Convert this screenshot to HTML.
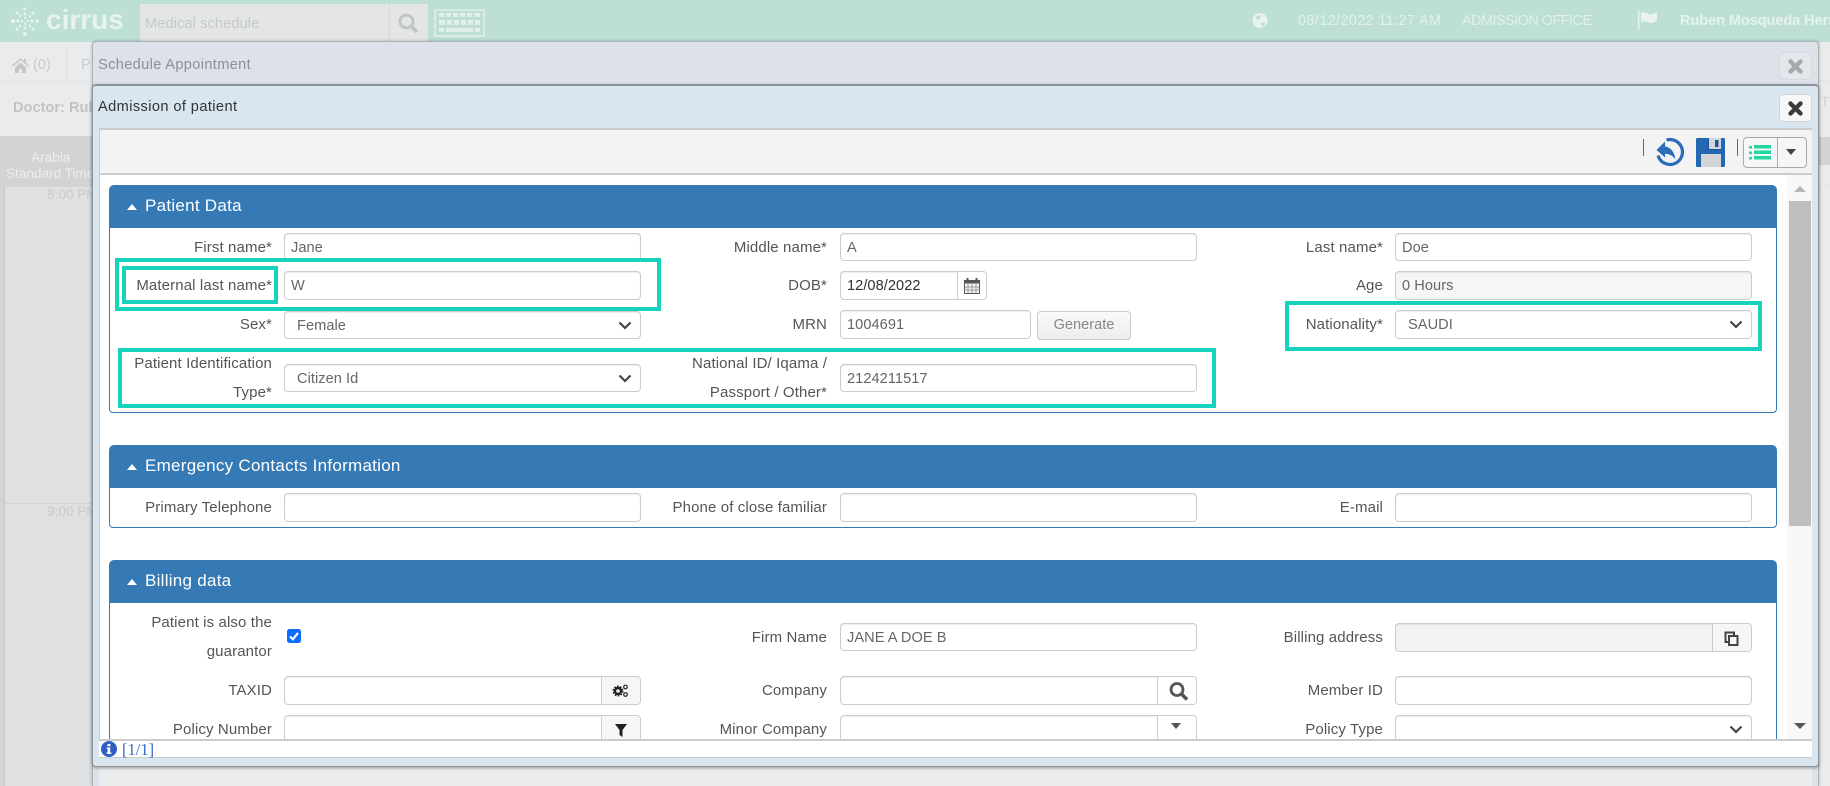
<!DOCTYPE html>
<html><head><meta charset="utf-8"><title>Admission of patient</title>
<style>
html,body{margin:0;padding:0;background:#e9ebed;overflow:hidden;}
body{position:relative;width:1830px;height:786px;overflow:hidden;font-family:"Liberation Sans",sans-serif;font-size:15px;color:#555;}
.a{position:absolute;box-sizing:border-box;}
.t{position:absolute;white-space:nowrap;line-height:20px;}
.l{position:absolute;white-space:nowrap;line-height:20px;text-align:right;width:220px;color:#555;font-size:15px;letter-spacing:.12px;margin-top:.5px}
.c1{left:52px}.c2{left:607px}.c3{left:1163px}
.i{position:absolute;box-sizing:border-box;background:#fff;border:1px solid #ccc;border-radius:4px;box-shadow:inset 0 1px 1px rgba(0,0,0,.08);padding-left:6px;font-size:14.6px;line-height:29px;color:#666;white-space:nowrap;overflow:hidden;letter-spacing:.05px}
.w1{left:284px;width:357px}.w2{left:840px;width:357px}.w3{left:1395px;width:357px}
.sel{padding-left:12px}
.chev{position:absolute;right:8px;top:9px;width:14px;height:9px}
.add{position:absolute;top:0;bottom:0;right:0;border-left:1px solid #ccc;background:#fff}
.hd{position:absolute;left:109px;width:1668px;height:43px;background:#3579b5;border-radius:5px 5px 0 0;color:#fff;font-size:17px;line-height:41px;padding-left:36px;box-sizing:border-box;letter-spacing:.27px}
.hd:before{content:"";position:absolute;left:18px;top:19px;border-left:5.5px solid transparent;border-right:5.5px solid transparent;border-bottom:6px solid #fff}
.bd{position:absolute;left:109px;width:1668px;border:1px solid #3579b5;border-top:0;box-sizing:border-box;border-radius:0 0 4px 4px;background:#fff}
.box{position:absolute;box-sizing:border-box;border:4.5px solid #17d2bd}
</style></head><body>

<!-- top bar -->
<div class="a" style="left:0;top:0;width:1830px;height:42px;background:#bddfd6"></div>
<svg class="a" style="left:9px;top:5px" width="34" height="32" viewBox="0 0 34 32" fill="#e9f4f1">
<circle cx="16" cy="4" r="1.6"/><circle cx="16" cy="9" r="1.5"/><circle cx="16" cy="13" r="1.2"/><circle cx="16" cy="19" r="1.2"/><circle cx="16" cy="23" r="1.5"/><circle cx="16" cy="29" r="2"/>
<circle cx="4" cy="16" r="2"/><circle cx="9" cy="16" r="1.6"/><circle cx="13" cy="16" r="1.2"/><circle cx="19" cy="16" r="1.2"/><circle cx="23" cy="16" r="1.6"/><circle cx="28" cy="16" r="1.8"/>
<circle cx="8" cy="8" r="1.5"/><circle cx="11" cy="11" r="1.2"/><circle cx="24" cy="8" r="1.5"/><circle cx="21" cy="11" r="1.2"/><circle cx="8" cy="24" r="1.5"/><circle cx="11" cy="21" r="1.2"/><circle cx="24" cy="24" r="1.5"/><circle cx="21" cy="21" r="1.2"/>
</svg>
<div class="t" style="left:46px;top:2px;font-size:28px;line-height:36px;font-weight:bold;color:#e6f3ef">cirrus</div>
<div class="a" style="left:140px;top:4px;width:288px;height:38px;background:#e3e6e5"></div>
<div class="a" style="left:389px;top:4px;width:1px;height:38px;background:#d6d9d8"></div>
<div class="t" style="left:145px;top:14px;font-size:14.6px;color:#c6c9c9;letter-spacing:.1px">Medical schedule</div>
<svg class="a" style="left:397px;top:12px" width="22" height="22" viewBox="0 0 22 22" fill="none" stroke="#c2c5c5"><circle cx="9.5" cy="9.5" r="6.5" stroke-width="3"/><path d="M14.5 14.5L20 20" stroke-width="4"/></svg>
<svg class="a" style="left:434px;top:9px" width="51" height="28" viewBox="0 0 51 28" fill="#e4efec"><path fill="none" stroke="#e4efec" stroke-width="1.5" d="M1 1h49v26H1z"/><path d="M5 4h5v4H5zM12 4h5v4h-5zM19 4h5v4h-5zM26 4h5v4h-5zM33 4h5v4h-5zM40 4h6v4h-6zM5 11h6v5H5zM13 11h5v5h-5zM20 11h5v5h-5zM27 11h5v5h-5zM34 11h5v5h-5zM41 11h5v5h-5zM5 19h5v4H5zM12 19h27v4H12zM41 19h5v4h-5z"/></svg>
<svg class="a" style="left:1252px;top:12px" width="18" height="17" viewBox="0 0 18 17"><circle cx="8" cy="8.5" r="7.5" fill="#e8f3f0"/><path d="M4 5l3-2 2 2-2 3-3-1zM9 11l3-1 1 2-3 3z" fill="#bddfd6"/></svg>
<div class="t" style="left:1298px;top:11px;font-size:14.4px;color:#e3f0ed;letter-spacing:.4px">08/12/2022 11:27 AM</div>
<div class="t" style="left:1462px;top:11px;font-size:14.4px;color:#e3f0ed;letter-spacing:-.5px">ADMISSION OFFICE</div>
<svg class="a" style="left:1638px;top:11px" width="20" height="18" viewBox="0 0 20 18" fill="#e8f3f0"><path d="M0 0h1.5v18H0z"/><path d="M3 2c4-2 7 2 10 1 2 0 4-1 6-2v9c-2 1-4 2-6 2-3 0-6-3-10-1z"/></svg>
<div class="t" style="left:1680px;top:11px;font-size:14.6px;font-weight:bold;color:#e6f2ef;letter-spacing:-.1px">Ruben Mosqueda Herrera</div>

<!-- background page -->
<div class="a" style="left:0;top:42px;width:1830px;height:744px;background:#e9ebed"></div>
<div class="a" style="left:0;top:81px;width:92px;height:1px;background:#e0e2e4"></div>
<div class="a" style="left:66px;top:48px;width:1px;height:33px;background:#dcdee0"></div>
<svg class="a" style="left:12px;top:58px" width="17" height="15" viewBox="0 0 17 15" fill="#c5c7c8"><path d="M8.5 0L0 7.5l1 1L8.5 2 16 8.5l1-1-3-2.7V1h-2v2zM3 9.5V15h4v-4h3v4h4V9.5L8.5 4.500z"/></svg>
<div class="t" style="left:33px;top:55px;font-size:14.6px;color:#c9cbcc">(0)</div>
<div class="t" style="left:81px;top:55px;font-size:14.6px;color:#c9cbcc">P</div>
<div class="t" style="left:13px;top:98px;font-size:14.6px;font-weight:bold;color:#c0c2c3">Doctor: Rub</div>
<div class="a" style="left:0;top:136px;width:92px;height:650px;background:#d2d3d4"></div>
<div class="a" style="left:4px;top:187px;width:88px;height:599px;background:#dfe0e2;border-left:1px solid #c8c9ca"></div>
<div class="a" style="left:5px;top:503px;width:87px;height:1px;background:#d1d2d4"></div>
<div class="t" style="left:31px;top:148px;font-size:13.6px;color:#eceded">Arabia</div>
<div class="t" style="left:6px;top:164px;font-size:13.6px;color:#eceded">Standard Time</div>
<div class="t" style="left:47px;top:185px;font-size:13.6px;color:#c9cacb">8:00 PM</div>
<div class="t" style="left:47px;top:502px;font-size:13.6px;color:#c9cacb">9:00 PM</div>
<div class="a" style="left:1819px;top:137px;width:11px;height:28px;background:#d2d3d4"></div>
<div class="a" style="left:1819px;top:185px;width:11px;height:1px;background:#e0e2e4"></div>
<div class="a" style="left:1819px;top:81px;width:11px;height:1px;background:#e0e2e4"></div>
<div class="t" style="left:1821px;top:92px;font-size:13px;color:#cfd1d2">T</div>

<!-- modal 1 -->
<div class="a" style="left:92px;top:41px;width:1727px;height:745px;background:#dde1e9;border-radius:4px 4px 0 0;border:1px solid #aeb2b5;border-bottom:0;box-shadow:0 0 3px rgba(0,0,0,.25)"></div>
<div class="t" style="left:98px;top:55px;font-size:14.6px;color:#8c8f93;letter-spacing:.35px">Schedule Appointment</div>
<div class="a" style="left:1779px;top:52px;width:33px;height:28px;background:#e3e6eb;border:1px solid #d6d9df;border-radius:4px"></div>
<svg class="a" style="left:1788px;top:59px" width="15" height="15" viewBox="0 0 15 15"><path d="M2.5 2.5l10 10M12.5 2.5l-10 10" stroke="#a6a8ab" stroke-width="4.4" stroke-linecap="round"/></svg>
<div class="a" style="left:99px;top:766px;width:1713px;height:20px;background:#eaecee"></div>

<!-- modal 2 -->
<div class="a" style="left:92px;top:84px;width:1727px;height:683px;background:#d9e5ef;border:1px solid #8f9498;border-top:2px solid #8f9498;border-radius:4px;box-shadow:0 1px 3px rgba(0,0,0,.35)"></div>
<div class="t" style="left:98px;top:97px;font-size:14.6px;color:#333;letter-spacing:.4px">Admission of patient</div>
<div class="a" style="left:1779px;top:94px;width:33px;height:28px;background:#f7f7f7;border:1px solid #d2d5d8;border-radius:4px"></div>
<svg class="a" style="left:1788px;top:101px" width="15" height="15" viewBox="0 0 15 15"><path d="M2.5 2.5l10 10M12.5 2.5l-10 10" stroke="#3a3a3a" stroke-width="4.4" stroke-linecap="round"/></svg>

<!-- toolbar -->
<div class="a" style="left:99px;top:128px;width:1713px;height:47px;background:#f3f3f3;border:2px solid #ccc;border-width:2px 0 2px 1px"></div>
<div class="a" style="left:1643px;top:139px;width:1px;height:17px;background:#666"></div>
<svg class="a" style="left:1655px;top:137px" width="30" height="31" viewBox="0 0 30 31"><path d="M11.500 3.000A12.500 12.500 0 1 1 3 18.500" fill="none" stroke="#2a6cb8" stroke-width="3.200"/><path d="M1.500 13L10 4.500V9.500C15.500 10 19.500 15 20.500 22.500C17.500 18.500 14 16.800 10 16.800V20.500Z" fill="#2a6cb8"/></svg>
<svg class="a" style="left:1696px;top:138px" width="30" height="29" viewBox="0 0 30 29"><rect width="29" height="29" rx="1.500" fill="#2367b3"/><path d="M0 1.500Q0 0 1.500 0H12V11H24V0H0z" fill="#1c5596" opacity="0"/><path d="M4 0h8v12h13V0z" fill="#1d5595"/><path d="M13 0h12v11H13z" fill="#cfd6de"/><path d="M19 2h3.500v7H19z" fill="#23538e"/><path d="M5 16h20v13H5z" fill="#d2d4d6"/></svg>
<div class="a" style="left:1737px;top:139px;width:1px;height:17px;background:#666"></div>
<div class="a" style="left:1743px;top:137px;width:64px;height:31px;background:#f6f6f6;border:1px solid #aaa;border-radius:4px"></div>
<div class="a" style="left:1777px;top:138px;width:1px;height:29px;background:#aaa"></div>
<svg class="a" style="left:1749px;top:145px" width="22" height="15" viewBox="0 0 22 15" fill="#23d6a2"><path d="M0 1h3v2.500H0zM0 6.500h3V9H0zM0 12h3v2.500H0zM5 0h17v3.500H5zM5 5.500h17V9H5zM5 11h17v3.500H5z"/></svg>
<div class="a" style="left:1786px;top:149px;border-left:5.500px solid transparent;border-right:5.500px solid transparent;border-top:6px solid #444"></div>

<!-- scroll content -->
<div class="a" style="left:99px;top:175px;width:1713px;height:564px;background:#fff;border-left:1px solid #ccc"></div>
<div class="a" style="left:0;top:0;width:1830px;height:739px;overflow:hidden;clip-path:inset(175px 18px 0 99px)">
  <div class="hd" style="top:185px">Patient Data</div>
  <div class="bd" style="top:228px;height:185px"></div>
  <div class="hd" style="top:445px">Emergency Contacts Information</div>
  <div class="bd" style="top:488px;height:40px"></div>
  <div class="hd" style="top:560px">Billing data</div>
  <div class="bd" style="top:603px;height:130px;border-bottom:0;border-radius:0"></div>
  <div class="a" style="left:109px;top:733px;width:1668px;height:6px;border-left:1px solid #3579b5;border-right:1px solid #3579b5"></div>

  <!-- row 1 -->
  <div class="l c1" style="top:237px">First name*</div><div class="i w1" style="top:233px;height:28px">Jane</div>
  <div class="l c2" style="top:237px">Middle name*</div><div class="i w2" style="top:233px;height:28px">A</div>
  <div class="l c3" style="top:237px">Last name*</div><div class="i w3" style="top:233px;height:28px">Doe</div>
  <!-- row 2 -->
  <div class="l c1" style="top:275px">Maternal last name*</div><div class="i w1" style="top:271px;height:29px">W</div>
  <div class="l c2" style="top:275px">DOB*</div>
  <div class="i" style="left:840px;width:147px;top:271px;height:29px;color:#333">12/08/2022
    <div class="add" style="width:28px;background:#fff"><svg style="position:absolute;left:6px;top:5px" width="16" height="17" viewBox="0 0 16 17"><path d="M.5 3.500h15v13H.5z" fill="#f2f2f2" stroke="#555"/><path d="M.5 3h15v3.500H.5z" fill="#555"/><path d="M3.500 1v4M12.500 1v4" stroke="#555" stroke-width="2"/><path d="M4 7v9M8 7v9M12 7v9M1 10h14M1 13h14" stroke="#888" stroke-width=".8"/></svg></div></div>
  <div class="l c3" style="top:275px">Age</div><div class="i w3" style="top:271px;height:29px;background:#f6f6f6">0 Hours</div>
  <!-- row 3 -->
  <div class="l c1" style="top:314px">Sex*</div>
  <div class="i w1 sel" style="top:311px;height:28px">Female<svg class="chev" viewBox="0 0 14 9"><path d="M1.500 1.500L7 7l5.500-5.500" fill="none" stroke="#444" stroke-width="2.200"/></svg></div>
  <div class="l c2" style="top:314px">MRN</div><div class="i" style="left:840px;width:191px;top:310px;height:29px">1004691</div>
  <div class="a" style="left:1037px;top:311px;width:94px;height:29px;background:linear-gradient(#fafafa,#ededed);border:1px solid #ccc;border-radius:4px;text-align:center;line-height:26px;font-size:14.6px;color:#888">Generate</div>
  <div class="l c3" style="top:314px">Nationality*</div>
  <div class="i w3 sel" style="top:310px;height:29px">SAUDI<svg class="chev" viewBox="0 0 14 9"><path d="M1.500 1.500L7 7l5.500-5.500" fill="none" stroke="#444" stroke-width="2.200"/></svg></div>
  <!-- row 4 -->
  <div class="l c1" style="top:353px">Patient Identification</div><div class="l c1" style="top:382px">Type*</div>
  <div class="i w1 sel" style="top:364px;height:28px">Citizen Id<svg class="chev" viewBox="0 0 14 9"><path d="M1.500 1.500L7 7l5.500-5.500" fill="none" stroke="#444" stroke-width="2.200"/></svg></div>
  <div class="l c2" style="top:353px">National ID/ Iqama /</div><div class="l c2" style="top:382px">Passport / Other*</div>
  <div class="i w2" style="top:364px;height:28px">2124211517</div>

  <!-- emergency -->
  <div class="l c1" style="top:497px">Primary Telephone</div><div class="i w1" style="top:493px;height:29px"></div>
  <div class="l c2" style="top:497px">Phone of close familiar</div><div class="i w2" style="top:493px;height:29px"></div>
  <div class="l c3" style="top:497px">E-mail</div><div class="i w3" style="top:493px;height:29px"></div>

  <!-- billing -->
  <div class="l c1" style="top:612px">Patient is also the</div><div class="l c1" style="top:641px">guarantor</div>
  <div class="a" style="left:287px;top:629px;width:14px;height:14px;background:#0d6efd;border-radius:2.500px"></div>
  <svg class="a" style="left:287px;top:629px" width="14" height="14" viewBox="0 0 14 14"><path d="M3 7.500l2.800 2.800L11 4" fill="none" stroke="#fff" stroke-width="2.200"/></svg>
  <div class="l c2" style="top:627px">Firm Name</div><div class="i w2" style="top:623px;height:28px">JANE A DOE B</div>
  <div class="l c3" style="top:627px">Billing address</div>
  <div class="i w3" style="top:623px;height:29px;background:#f3f3f3"><div class="add" style="width:38px;background:#f5f5f5"><svg style="position:absolute;left:11px;top:7px" width="15" height="15" viewBox="0 0 15 15" fill="none" stroke="#444" stroke-width="2"><path d="M4 11H1.500V1.500H10V4"/><path d="M5 5h8.500v9H5z"/></svg></div></div>

  <div class="l c1" style="top:680px">TAXID</div>
  <div class="i w1" style="top:676px;height:29px"><div class="add" style="width:38px;background:#f6f6f6"><svg style="position:absolute;left:10px;top:6px" width="18" height="16" viewBox="0 0 18 16" fill="none" stroke="#222"><circle cx="6" cy="8" r="3" stroke-width="2.400"/><circle cx="6" cy="8" r="4.700" stroke-width="1.500" stroke-dasharray="1.700 1.300"/><circle cx="13.500" cy="4" r="1.800" stroke-width="1.200"/><circle cx="13.500" cy="11.500" r="1.800" stroke-width="1.200"/></svg></div></div>
  <div class="l c2" style="top:680px">Company</div>
  <div class="i w2" style="top:676px;height:29px"><div class="add" style="width:38px"><svg style="position:absolute;left:10px;top:4px" width="21" height="20" viewBox="0 0 21 20" fill="none" stroke="#555"><circle cx="9" cy="8.500" r="6" stroke-width="2.800"/><path d="M13.500 13l5.500 5.500" stroke-width="3.500"/></svg></div></div>
  <div class="l c3" style="top:680px">Member ID</div><div class="i w3" style="top:676px;height:29px"></div>

  <div class="l c1" style="top:719px">Policy Number</div>
  <div class="i w1" style="top:715px;height:30px"><div class="add" style="width:38px;background:#f6f6f6"><svg style="position:absolute;left:13px;top:8px" width="12" height="13" viewBox="0 0 12 13"><path d="M0 0h12L7.500 6v7l-3-2V6z" fill="#222"/></svg></div></div>
  <div class="l c2" style="top:719px">Minor Company</div>
  <div class="i w2" style="top:715px;height:30px"><div class="add" style="width:38px"><div class="a" style="left:13px;top:7px;border-left:5.500px solid transparent;border-right:5.500px solid transparent;border-top:6px solid #555"></div></div></div>
  <div class="l c3" style="top:719px">Policy Type</div>
  <div class="i w3" style="top:715px;height:30px"><svg class="chev" viewBox="0 0 14 9"><path d="M1.500 1.500L7 7l5.500-5.500" fill="none" stroke="#444" stroke-width="2.200"/></svg></div>

  <!-- scrollbar -->
  <div class="a" style="left:1787px;top:175px;width:25px;height:564px;background:#f8f8f8"></div>
  <div class="a" style="left:1789px;top:201px;width:22px;height:325px;background:#bfbfbf"></div>
  <div class="a" style="left:1794px;top:186px;border-left:6px solid transparent;border-right:6px solid transparent;border-bottom:6px solid #b5b5b5"></div>
  <div class="a" style="left:1794px;top:723px;border-left:6px solid transparent;border-right:6px solid transparent;border-top:6px solid #555"></div>
</div>

<!-- footer -->
<div class="a" style="left:99px;top:739px;width:1713px;height:19px;background:#fff;border-top:2px solid #ccc;border-bottom:1px solid #ccc"></div>
<svg class="a" style="left:101px;top:741px" width="16" height="16" viewBox="0 0 16 16"><circle cx="8" cy="8" r="8" fill="#2e5fc4"/><path d="M6.500 3h3v2.200h-3zM5.800 6.500h3.400v5h1.200v1.500H5.600v-1.500h1V8H5.800z" fill="#fff"/></svg>
<div class="t" style="left:122px;top:740px;font-family:'Liberation Serif',serif;font-size:16.5px;color:#3768bb;line-height:20px">[1/1]</div>

<!-- teal annotation boxes -->
<div class="box" style="left:115px;top:258px;width:546px;height:53px"></div>
<div class="box" style="left:122px;top:266px;width:156px;height:38px;background:transparent"></div>
<div class="box" style="left:118px;top:348px;width:1098px;height:60px"></div>
<div class="box" style="left:1285px;top:301px;width:477px;height:50px"></div>
</body></html>
